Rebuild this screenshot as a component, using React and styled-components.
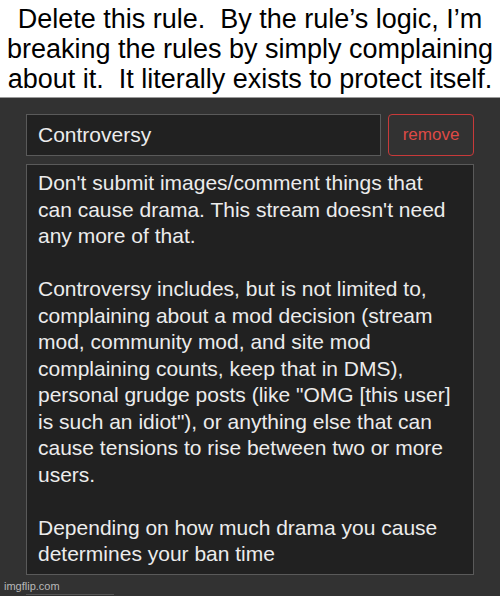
import React from "react";
import styled, { createGlobalStyle } from "styled-components";

const Global = createGlobalStyle`
  html, body { margin: 0; padding: 0; background: #323232; }
  body { width: 500px; height: 596px; overflow: hidden; font-family: "Liberation Sans", Arial, sans-serif; }
`;

const Page = styled.div`
  width: 500px;
  height: 596px;
  display: flex;
  flex-direction: column;
  position: relative;
  overflow: hidden;
`;

const Caption = styled.div`
  height: 98px;
  flex-shrink: 0;
  box-sizing: border-box;
  padding-top: 4px;
  background: #ffffff;
  border-bottom: 1px solid #9a9a9a;
  color: #000;
  font-size: 27px;
  line-height: 30px;
  text-align: center;
  white-space: pre;
`;

const Panel = styled.div`
  flex: 1;
  background: #323232;
  padding: 16px 26px 0 26px;
  display: flex;
  flex-direction: column;
  gap: 8px;
  overflow: hidden;
`;

const Row = styled.div`
  display: flex;
  gap: 7px;
  height: 42px;
  flex-shrink: 0;
`;

const TitleField = styled.div`
  flex: 1;
  box-sizing: border-box;
  background: #212121;
  border: 1px solid #5a5a5a;
  display: flex;
  align-items: center;
  padding: 0 11px;
  color: #ececec;
  font-size: 21px;
`;

const RemoveButton = styled.div`
  width: 86px;
  box-sizing: border-box;
  border: 1.5px solid #c83a3a;
  border-radius: 4px;
  display: flex;
  align-items: center;
  justify-content: center;
  color: #dd4a46;
  font-size: 17px;
  padding-bottom: 1px;
`;

const Description = styled.div`
  height: 411px;
  box-sizing: border-box;
  background: #212121;
  border: 1px solid #5a5a5a;
  padding: 5px 11px 0 11px;
  color: #ececec;
  font-size: 21px;
  line-height: 26.5px;
  white-space: pre;
  flex-shrink: 0;
`;

const NextRow = styled.div`
  margin-top: 11px;
  width: 88px;
  height: 30px;
  flex-shrink: 0;
  box-sizing: border-box;
  border-top: 1px solid #555;
  background: #303030;
`;

const Watermark = styled.div`
  position: absolute;
  left: 4px;
  bottom: 4px;
  color: #b8b8b8;
  font-size: 11px;
  line-height: 12px;
`;

const caption = "Delete this rule.  By the rule\u2019s logic, I\u2019m\nbreaking the rules by simply complaining\nabout it.  It literally exists to protect itself.";

const rule = `Don't submit images/comment things that
can cause drama. This stream doesn't need
any more of that.

Controversy includes, but is not limited to,
complaining about a mod decision (stream
mod, community mod, and site mod
complaining counts, keep that in DMS),
personal grudge posts (like "OMG [this user]
is such an idiot"), or anything else that can
cause tensions to rise between two or more
users.

Depending on how much drama you cause
determines your ban time`;

export default function App() {
  return (
    <Page>
      <Global />
      <Caption>{caption}</Caption>
      <Panel>
        <Row>
          <TitleField>Controversy</TitleField>
          <RemoveButton>remove</RemoveButton>
        </Row>
        <Description>{rule}</Description>
        <NextRow />
      </Panel>
      <Watermark>imgflip.com</Watermark>
    </Page>
  );
}
